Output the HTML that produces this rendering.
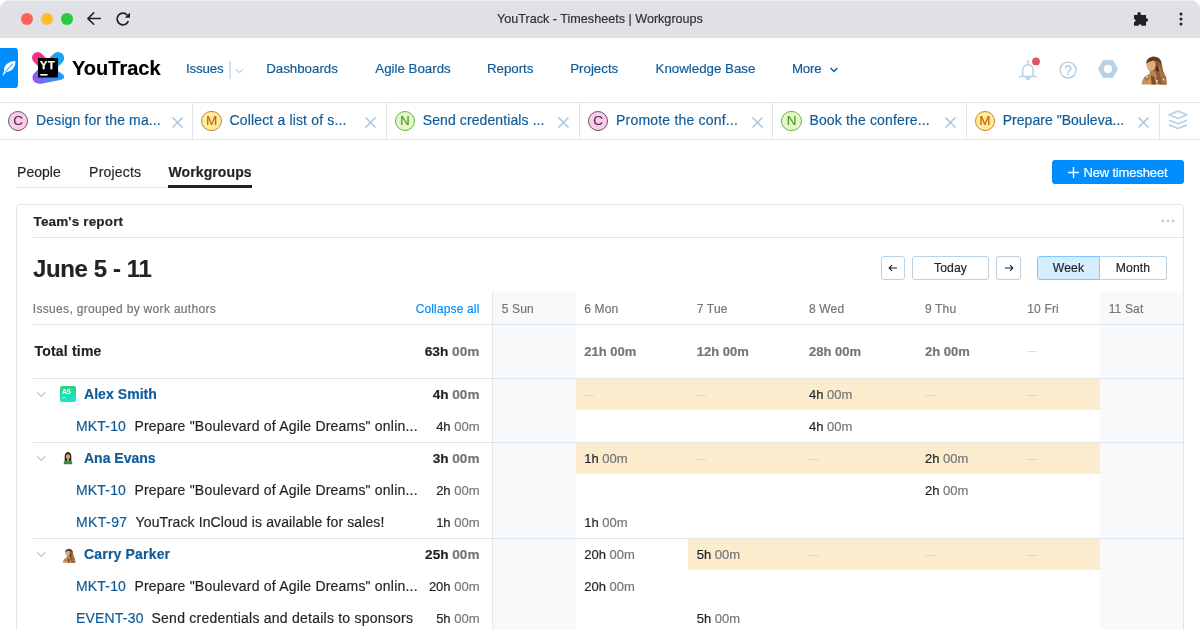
<!DOCTYPE html>
<html lang="en">
<head>
<meta charset="utf-8">
<title>YouTrack - Timesheets | Workgroups</title>
<style>
*{box-sizing:border-box;margin:0;padding:0}
html,body{width:1200px;height:630px;overflow:hidden;background:#fff}
body{font-family:"Liberation Sans",sans-serif;color:#1f2326;position:relative;-webkit-text-stroke:0.180px}
.a{position:absolute;white-space:nowrap}
#win{position:absolute;left:0;top:0;width:1200px;height:630px;overflow:hidden;background:#fff;border-radius:9px 9px 0 0;will-change:transform}
#titlebar{position:absolute;left:0;top:0;width:1200px;height:38px;background:#dfe1e5;border-top:1px solid #ecedef}
.tl{position:absolute;top:12px;width:12px;height:12px;border-radius:50%}
#title{left:0;width:1200px;text-align:center;top:11px;font-size:12.6px;line-height:15px;color:#2e3033}
.nv{top:61.100px;font-size:13.3px;line-height:16px;color:#0f5b99}
#fab{position:absolute;left:0;top:48px;width:18px;height:40px;background:#008eff;border-radius:0 3px 3px 0}
#brand{left:72px;top:56px;font-size:20px;line-height:24px;font-weight:700;color:#000}
#tabs{position:absolute;left:0;top:102px;width:1200px;height:38px;border-top:1px solid #dfe5eb;border-bottom:1px solid #dfe5eb}
.tab{position:absolute;top:0;height:36px;border-right:1px solid #dfe5eb}
.ic{position:absolute;left:8px;top:8px;width:20.400px;height:20.400px;border-radius:50%;border:1.400px solid #555;font-size:13.500px;line-height:17.600px;text-align:center;-webkit-text-stroke:0.200px}
.tx{position:absolute;left:36.100px;top:7.5px;font-size:14px;line-height:18px;color:#0f5b99;white-space:nowrap;letter-spacing:0.1px}
.x{position:absolute;left:171.600px;top:14px}
.st{top:163px;font-size:14px;line-height:18px;color:#1f2326}
#card{position:absolute;left:16px;top:204px;width:1168px;height:440px;border:1px solid #dfe5eb;border-radius:4px;background:#fff}
.btn{position:absolute;top:256px;height:24px;border:1px solid #b8d1e5;border-radius:3px;font-size:12.2px;line-height:22px;text-align:center;color:#1f2326;background:#fff;letter-spacing:0.1px}
.hd{top:301px;font-size:12px;line-height:16px;color:#737577;letter-spacing:0.150px}
.hl{position:absolute;height:31px;background:#faeccd}
.ln{position:absolute;height:1px;background:#dfe5eb}
.t{font-size:13px;line-height:16px;color:#737577}
.t b{font-weight:400;color:#1f2326;-webkit-text-stroke:0.2px #1f2326}
.tb{font-size:13px;line-height:16px;color:#737577;font-weight:700}
.tn{font-size:13.6px;line-height:16px;color:#737577;font-weight:700}
.tn b{color:#1f2326}
.d{position:absolute;width:9.500px;height:1px;background:#dde0e3}
.dh{position:absolute;width:9.500px;height:1px;background:#d9d8d2}
.nm{font-size:14px;line-height:18px;font-weight:700;color:#0f5b99}
.id{font-size:14px;line-height:18px;color:#0f5b99}
.sm{font-size:14px;line-height:18px;color:#1f2326;letter-spacing:0.2px}
</style>
</head>
<body>
<div id="win">
<svg width="0" height="0" style="position:absolute">
<defs>
<linearGradient id="lg1" x1="0" y1="1" x2="1" y2="0.4"><stop offset="0" stop-color="#9a55f7"/><stop offset="0.55" stop-color="#3c8cf4"/><stop offset="1" stop-color="#17a6f2"/></linearGradient>
<linearGradient id="lg2" x1="0" y1="0" x2="0" y2="1"><stop offset="0" stop-color="#2fd17f"/><stop offset="1" stop-color="#17e6d3"/></linearGradient>

</defs></svg>
<div id="titlebar">
<div class="tl" style="left:21px;background:#fe5f57"></div><div class="tl" style="left:41px;background:#febc2e"></div><div class="tl" style="left:61px;background:#28c840"></div>
<svg class="a" style="left:86px;top:10px" width="16" height="16" viewBox="0 0 16 16" fill="none" stroke="#202124" stroke-width="1.5" stroke-linecap="round" stroke-linejoin="round"><path d="M14.400 7.600H1.800M7.700 1.900L1.900 7.600 7.700 13.300"/></svg>
<svg class="a" style="left:115px;top:9px" width="16" height="18" viewBox="0 0 16 18" fill="none" stroke="#202124" stroke-width="1.5" stroke-linecap="round" stroke-linejoin="round"><path d="M12.340 5.270A5.800 5.800 0 1 0 13.350 10.980" stroke-width="1.700" stroke-linecap="butt"/><path d="M15 2.500v5.300H9.800z" fill="#202124" stroke="none"/></svg>
<div id="title" class="a">YouTrack - Timesheets | Workgroups</div>
<svg class="a" style="left:1134px;top:11px" width="15" height="14" viewBox="0 0 15 14"><path d="M0 3h3.400v-1.300a1.700 1.700 0 1 1 3.400 0v1.300h5.200v3.300h.4a1.700 1.700 0 1 1 0 3.400h-.4v4.100h-4.400a1.600 1.600 0 1 0-3.200 0H0v-3.700a1.600 1.600 0 1 0 0-3.200z" fill="#202124"/></svg>
<svg class="a" style="left:1178px;top:11px" width="6" height="16" viewBox="0 0 6 16" fill="#202124"><circle cx="3" cy="2" r="1.500"/><circle cx="3" cy="7" r="1.500"/><circle cx="3" cy="12" r="1.500"/></svg>
</div>
<div id="fab"><svg class="a" style="left:0;top:10px" width="18" height="20" viewBox="0 0 18 20"><path d="M2.700 17.300l1.400-4.300C3.300 7.800 8 3.300 15.300 2.900c.6 6-3.300 10.600-9.500 11.300L3.500 17.600z" fill="#fff"/><path d="M5.200 13.800L12.800 5.800" stroke="#008eff" stroke-width="1" fill="none"/></svg></div>
<svg class="a" style="left:32px;top:52px" width="32" height="32" viewBox="0 0 32 32">
<path d="M26 6.200L6.600 25.500" stroke="url(#lg1)" stroke-width="12.300" stroke-linecap="round" fill="none"/>
<path d="M3 22L16 12l15.400 10.800q2 3.300-2 5L8 32z" fill="url(#lg1)"/>
<path d="M5.700 5.800L15 15" stroke="#fc2f88" stroke-width="11.400" stroke-linecap="round" fill="none"/>
<rect x="6" y="6" width="20" height="19.500" fill="#000"/>
<text x="8" y="16.500" font-family="Liberation Sans, sans-serif" font-size="11" font-weight="700" fill="#fff" letter-spacing="0.7" stroke="#fff" stroke-width="0.25">YT</text>
<rect x="8.300" y="22" width="7.200" height="1.600" fill="#fff"/>
</svg>
<div id="brand" class="a">YouTrack</div>
<div class="a nv" style="left:186.1px;letter-spacing:-0.2px">Issues</div>
<div class="a nv" style="left:266.2px;letter-spacing:0px">Dashboards</div>
<div class="a nv" style="left:375.3px;letter-spacing:0px">Agile Boards</div>
<div class="a nv" style="left:486.9px;letter-spacing:0px">Reports</div>
<div class="a nv" style="left:570.2px;letter-spacing:0px">Projects</div>
<div class="a nv" style="left:655.6px;letter-spacing:0px">Knowledge Base</div>
<div class="a nv" style="left:791.9px;letter-spacing:-0.2px">More</div>
<div class="a" style="left:229.200px;top:61px;width:1.600px;height:18px;background:#d6e4f0"></div>
<svg class="a" style="left:235px;top:68px" width="9" height="6" viewBox="0 0 9 6" fill="none" stroke="#bcd2e6" stroke-width="1.300"><path d="M1 1.200l3.500 3.500L8 1.200"/></svg>
<svg class="a" style="left:829.500px;top:67px" width="8" height="6" viewBox="0 0 8 6" fill="none" stroke="#0f5b99" stroke-width="1.400"><path d="M.6 1.100l3.400 3.400 3.400-3.400"/></svg>
<svg class="a" style="left:1018px;top:58px;overflow:visible" width="24" height="24" viewBox="0 0 24 24" fill="none" stroke="#b8d1e5" stroke-width="1.500"><path d="M9.900 1.800V6.500M4.650 18.300V12a5.250 5.250 0 0 1 10.500 0v6.300M1.200 18.600h17.500"/><path d="M7.200 19.300a2.700 2.700 0 0 0 5.400 0z" fill="#b8d1e5" stroke="none"/><circle cx="18" cy="3.400" r="3.900" fill="#dd5560" stroke="none"/></svg>
<svg class="a" style="left:1058px;top:60px" width="20" height="20" viewBox="0 0 20 20"><circle cx="10.100" cy="10" r="7.950" fill="none" stroke="#b8d1e5" stroke-width="1.500"/><path d="M7.400 8.300a2.700 2.700 0 1 1 4.200 2.300c-1 .7-1.500 1.300-1.500 2.300" fill="none" stroke="#b8d1e5" stroke-width="1.700"/><circle cx="10.100" cy="14.400" r="1" fill="#b8d1e5"/></svg>
<svg class="a" style="left:1097px;top:59px" width="22" height="20" viewBox="0 0 22 20"><path d="M6.200 1.200h9.600l4.900 8.700-4.900 8.700H6.200L1.300 9.900z" fill="#b8d1e5" stroke="#b8d1e5" stroke-width=".6" stroke-linejoin="round"/><circle cx="11" cy="9.900" r="4.100" fill="#fff"/></svg>
<svg class="a" style="left:1136px;top:52.600px;filter:blur(0.6px)" width="32" height="32" viewBox="0 0 32 32"><path d="M5.500 31.500c.5-5 2.500-8 7.500-10.500l10-2c4.500 2 7.500 6 7.800 12.500z" fill="#c99460"/><path d="M10.300 10.500c0-4.500 3.500-7 7.700-7 5 0 7.500 3.500 8 8.500.5 5 2 9 4.200 12l.3 7.500h-8l-3.500-9z" fill="#8c5a34"/><ellipse cx="15" cy="12" rx="4.600" ry="6" fill="#deae82"/><path d="M10.200 10.500c1-5 6-7.500 11.500-5.500 2.500 1.200 3.500 3.500 3.500 6-3-3.500-6.500-4-9.500-3-2.500.8-4 1.500-5.500 2.500z" fill="#5e3519"/><path d="M13.500 17.500l6 1 1.500 6-7 2z" fill="#bb8655"/><path d="M20.500 12.500c2 1.500 3.200 4 2.700 6.500l-3.200-2z" fill="#3a2417"/><path d="M24 12c1.500 5 3 9 6 12.500l.3 7h-4c-1-7-3-13-4.500-17z" fill="#a8723f"/><path d="M15 22.500l3.500 1.500 1.500 7.500h-4.500z" fill="#7d4d2b"/><path d="M8 25l4-3 1.500 2.500-3 4z" fill="#a87345"/><circle cx="11" cy="24" r="1" fill="#f3e3d0"/><circle cx="27.500" cy="26.500" r=".9" fill="#efd9a8"/><circle cx="21" cy="28" r="1" fill="#e9cfae"/></svg>
<div id="tabs">
<div class="tab" style="left:0.0px;width:193.33px"><div class="ic" style="background:#ffc8ec;border-color:#565c5f;color:#3f4548">C</div><div class="tx" style="letter-spacing:0.13px">Design for the ma...</div><svg class="x" width="11" height="11" viewBox="0 0 11 11" stroke="#a9c4de" stroke-width="1.500" fill="none"><path d="M.5.500l10 10M10.500.500l-10 10"/></svg></div>
<div class="tab" style="left:193.33px;width:193.33px"><div class="ic" style="background:#fdec9b;border-color:#ce7f30;color:#c4680c">M</div><div class="tx" style="letter-spacing:0.16px">Collect a list of s...</div><svg class="x" width="11" height="11" viewBox="0 0 11 11" stroke="#a9c4de" stroke-width="1.500" fill="none"><path d="M.5.500l10 10M10.500.500l-10 10"/></svg></div>
<div class="tab" style="left:386.66px;width:193.33px"><div class="ic" style="background:#e6f5d0;border-color:#64b53a;color:#4ea318">N</div><div class="tx" style="letter-spacing:0.1px">Send credentials ...</div><svg class="x" width="11" height="11" viewBox="0 0 11 11" stroke="#a9c4de" stroke-width="1.500" fill="none"><path d="M.5.500l10 10M10.500.500l-10 10"/></svg></div>
<div class="tab" style="left:579.99px;width:193.33px"><div class="ic" style="background:#ffc8ec;border-color:#565c5f;color:#3f4548">C</div><div class="tx" style="letter-spacing:0.19px">Promote the conf...</div><svg class="x" width="11" height="11" viewBox="0 0 11 11" stroke="#a9c4de" stroke-width="1.500" fill="none"><path d="M.5.500l10 10M10.500.500l-10 10"/></svg></div>
<div class="tab" style="left:773.32px;width:193.33px"><div class="ic" style="background:#e6f5d0;border-color:#64b53a;color:#4ea318">N</div><div class="tx" style="letter-spacing:0.15px">Book the confere...</div><svg class="x" width="11" height="11" viewBox="0 0 11 11" stroke="#a9c4de" stroke-width="1.500" fill="none"><path d="M.5.500l10 10M10.500.500l-10 10"/></svg></div>
<div class="tab" style="left:966.65px;width:193.33px"><div class="ic" style="background:#fdec9b;border-color:#ce7f30;color:#c4680c">M</div><div class="tx" style="letter-spacing:0.03px">Prepare "Bouleva...</div><svg class="x" width="11" height="11" viewBox="0 0 11 11" stroke="#a9c4de" stroke-width="1.500" fill="none"><path d="M.5.500l10 10M10.500.500l-10 10"/></svg></div>
<svg class="a" style="left:1168px;top:7px" width="20" height="20" viewBox="0 0 20 20" fill="none" stroke="#b8d1e5" stroke-width="1.700" stroke-linejoin="round"><path d="M10 1.100l9 3.700-9 3.700-9-3.700z"/><path d="M1 10.200l9 3.600 9-3.600M1 14.900l9 3.600 9-3.600"/></svg>
</div>
<div class="a st" style="left:17.100px">People</div><div class="a st" style="left:89.100px;letter-spacing:0.2px">Projects</div><div class="a st" style="left:168.500px;font-weight:700;letter-spacing:0.1px">Workgroups</div>
<div class="ln" style="left:16px;top:187px;width:152px"></div><div class="a" style="left:168px;top:185px;width:84px;height:3px;background:#1f2326"></div>
<div class="a" style="left:1052px;top:160px;width:132px;height:24px;border-radius:3px;background:#008eff"></div>
<svg class="a" style="left:1068px;top:167px" width="11" height="11" viewBox="0 0 11 11" stroke="#fff" stroke-width="1.400"><path d="M5.500 0v11M0 5.500h11"/></svg>
<div class="a" style="left:1083.400px;top:164.7px;font-size:13px;line-height:16px;color:#fff;letter-spacing:-0.15px">New timesheet</div>
<div id="card"></div>
<div class="a" style="left:33.500px;top:213.5px;font-size:13.500px;line-height:16px;font-weight:700;letter-spacing:0.15px">Team's report</div>
<svg class="a" style="left:1161px;top:219px" width="14" height="4" viewBox="0 0 14 4" fill="#b8d1e5"><circle cx="2" cy="2" r="1.400"/><circle cx="7" cy="2" r="1.400"/><circle cx="12" cy="2" r="1.400"/></svg>
<div class="ln" style="left:33px;top:237px;width:1150px"></div>
<div class="a" style="left:33px;top:255px;font-size:24px;line-height:28px;font-weight:700;letter-spacing:-0.4px">June 5 - 11</div>
<div class="btn" style="left:881px;width:24px"></div><div class="btn" style="left:912px;width:77px">Today</div><div class="btn" style="left:996px;width:25px"></div>
<svg class="a" style="left:888px;top:264px" width="10" height="8" viewBox="0 0 10 8" fill="none" stroke="#1f2326" stroke-width="1.100"><path d="M9 4H1.200M4 1.200L1.200 4 4 6.800"/></svg>
<svg class="a" style="left:1004px;top:264px" width="10" height="8" viewBox="0 0 10 8" fill="none" stroke="#1f2326" stroke-width="1.100"><path d="M1 4h7.800M6 1.200L8.800 4 6 6.800"/></svg>
<div class="btn" style="left:1037px;width:63px;background:#d4edff;border-color:#80c6ff;border-radius:3px 0 0 3px">Week</div><div class="btn" style="left:1100px;width:67px;border-radius:0 3px 3px 0;border-left:none">Month</div>
<div class="a" style="left:492px;top:292px;width:83.5px;height:340px;background:#f7f9fa;border-left:1px solid #e4e9ee"></div>
<div class="a" style="left:1100px;top:292px;width:83px;height:340px;background:#f7f9fa"></div>
<div class="ln" style="left:33px;top:324px;width:1150px"></div>
<div class="a hd" style="left:32.800px;letter-spacing:0.32px">Issues, grouped by work authors</div>
<div class="a hd" style="right:720.500px;color:#008eff;letter-spacing:0.15px">Collapse all</div>
<div class="a hd" style="left:501.75px">5 Sun</div>
<div class="a hd" style="left:584.25px">6 Mon</div>
<div class="a hd" style="left:696.75px">7 Tue</div>
<div class="a hd" style="left:809px">8 Wed</div>
<div class="a hd" style="left:925px">9 Thu</div>
<div class="a hd" style="left:1027.3px">10 Fri</div>
<div class="a hd" style="left:1108.7px">11 Sat</div>
<div class="a" style="left:34.500px;top:342px;font-size:14px;line-height:18px;font-weight:700;letter-spacing:0.2px">Total time</div>
<div class="a tn" style="right:720.500px;top:343.7px;font-size:13.700px"><b>63h</b> 00m</div>
<div class="a tb" style="left:584.25px;top:344px">21h 00m</div>
<div class="a tb" style="left:696.75px;top:344px">12h 00m</div>
<div class="a tb" style="left:809px;top:344px">28h 00m</div>
<div class="a tb" style="left:925px;top:344px">2h 00m</div>
<div class="d" style="left:1027.3px;top:351px"></div>
<div class="ln" style="left:33px;top:378px;width:1150px"></div>
<div class="hl" style="left:575.5px;top:379px;width:524.8px"></div>
<svg class="a" style="left:35.700px;top:391.3px" width="11" height="7" viewBox="0 0 11 7" fill="none" stroke="#b8d1e5" stroke-width="1.400"><path d="M1.200 1.200L5.300 5.300l4.100-4.100"/></svg>
<svg class="a" style="left:60px;top:386px" width="16" height="16" viewBox="0 0 16 16"><rect width="16" height="16" rx="2" fill="url(#lg2)"/><text x="2" y="8" font-family="Liberation Sans, sans-serif" font-size="6.800" font-weight="700" fill="#fff" letter-spacing="-0.3">AS</text><rect x="2.300" y="11.200" width="3.200" height="1" fill="#fff" opacity=".7"/></svg>
<div class="a nm" style="left:84px;top:385px;letter-spacing:0.06px">Alex Smith</div>
<div class="a tn" style="right:720.500px;top:386.7px"><b>4h</b> 00m</div>
<div class="dh" style="left:584.25px;top:395px"></div>
<div class="dh" style="left:696.75px;top:395px"></div>
<div class="a t" style="left:809px;top:386.7px"><b>4h</b> 00m</div>
<div class="dh" style="left:925px;top:395px"></div>
<div class="dh" style="left:1027.3px;top:395px"></div>
<div class="a id" style="left:75.900px;top:417px;letter-spacing:0.2px">MKT-10</div>
<div class="a sm" style="left:134.4px;top:417px;letter-spacing:0.2px">Prepare "Boulevard of Agile Dreams" onlin...</div>
<div class="a t" style="right:720.500px;top:418.7px"><b>4h</b> 00m</div>
<div class="a t" style="left:809px;top:418.7px"><b>4h</b> 00m</div>
<div class="ln" style="left:33px;top:442px;width:1150px"></div>
<div class="hl" style="left:575.5px;top:443px;width:524.8px"></div>
<svg class="a" style="left:35.700px;top:455.3px" width="11" height="7" viewBox="0 0 11 7" fill="none" stroke="#b8d1e5" stroke-width="1.400"><path d="M1.200 1.200L5.300 5.300l4.100-4.100"/></svg>
<svg class="a" style="left:60px;top:449.7px" width="16" height="20" viewBox="0 0 16 20"><g style="filter:blur(0.3px)"><path d="M4.700 12.500V6.500c0-3 1.500-4.500 3.300-4.500s3.300 1.500 3.300 4.500v6z" fill="#1f2a2e"/><ellipse cx="8" cy="6.500" rx="2.100" ry="2.600" fill="#e2a860"/><rect x="7.100" y="8.500" width="1.800" height="3.500" fill="#e2a860"/><path d="M3.800 14.300v-2.300c1-.8 2.500-1.200 3.300-1.200l.9 1 .9-1c.8 0 2.300.4 3.300 1.200v2.300z" fill="#2f8f3c"/></g></svg>
<div class="a nm" style="left:84px;top:449px;letter-spacing:0px">Ana Evans</div>
<div class="a tn" style="right:720.500px;top:450.7px"><b>3h</b> 00m</div>
<div class="a t" style="left:584.25px;top:450.7px"><b>1h</b> 00m</div>
<div class="dh" style="left:696.75px;top:459px"></div>
<div class="dh" style="left:809px;top:459px"></div>
<div class="a t" style="left:925px;top:450.7px"><b>2h</b> 00m</div>
<div class="dh" style="left:1027.3px;top:459px"></div>
<div class="a id" style="left:75.900px;top:481px;letter-spacing:0.2px">MKT-10</div>
<div class="a sm" style="left:134.4px;top:481px;letter-spacing:0.2px">Prepare "Boulevard of Agile Dreams" onlin...</div>
<div class="a t" style="right:720.500px;top:482.7px"><b>2h</b> 00m</div>
<div class="a t" style="left:925px;top:482.7px"><b>2h</b> 00m</div>
<div class="a id" style="left:75.900px;top:513px;letter-spacing:0.45px">MKT-97</div>
<div class="a sm" style="left:135.6px;top:513px;letter-spacing:0.12px">YouTrack InCloud is available for sales!</div>
<div class="a t" style="right:720.500px;top:514.7px"><b>1h</b> 00m</div>
<div class="a t" style="left:584.25px;top:514.7px"><b>1h</b> 00m</div>
<div class="ln" style="left:33px;top:538px;width:1150px"></div>
<div class="hl" style="left:688px;top:539px;width:412.29999999999995px"></div>
<svg class="a" style="left:35.700px;top:551.3px" width="11" height="7" viewBox="0 0 11 7" fill="none" stroke="#b8d1e5" stroke-width="1.400"><path d="M1.200 1.200L5.300 5.300l4.100-4.100"/></svg>
<svg class="a" style="left:60px;top:546.5px;filter:blur(0.4px)" width="16" height="16" viewBox="0 0 32 32"><path d="M5.500 31.500c.5-5 2.500-8 7.500-10.500l10-2c4.500 2 7.500 6 7.800 12.500z" fill="#c99460"/><path d="M10.300 10.500c0-4.500 3.500-7 7.700-7 5 0 7.500 3.500 8 8.500.5 5 2 9 4.200 12l.3 7.500h-8l-3.500-9z" fill="#8c5a34"/><ellipse cx="15" cy="12" rx="4.600" ry="6" fill="#deae82"/><path d="M10.200 10.500c1-5 6-7.500 11.500-5.500 2.500 1.200 3.500 3.500 3.500 6-3-3.500-6.500-4-9.500-3-2.500.8-4 1.500-5.500 2.500z" fill="#5e3519"/><path d="M13.500 17.500l6 1 1.500 6-7 2z" fill="#bb8655"/><path d="M20.500 12.500c2 1.500 3.200 4 2.700 6.500l-3.200-2z" fill="#3a2417"/><path d="M24 12c1.500 5 3 9 6 12.500l.3 7h-4c-1-7-3-13-4.500-17z" fill="#a8723f"/><path d="M15 22.500l3.500 1.500 1.500 7.500h-4.500z" fill="#7d4d2b"/><path d="M8 25l4-3 1.500 2.500-3 4z" fill="#a87345"/><circle cx="11" cy="24" r="1" fill="#f3e3d0"/><circle cx="27.500" cy="26.500" r=".9" fill="#efd9a8"/><circle cx="21" cy="28" r="1" fill="#e9cfae"/></svg>
<div class="a nm" style="left:84px;top:545px;letter-spacing:0.18px">Carry Parker</div>
<div class="a tn" style="right:720.500px;top:546.7px"><b>25h</b> 00m</div>
<div class="a t" style="left:584.25px;top:546.7px"><b>20h</b> 00m</div>
<div class="a t" style="left:696.75px;top:546.7px"><b>5h</b> 00m</div>
<div class="dh" style="left:809px;top:555px"></div>
<div class="dh" style="left:925px;top:555px"></div>
<div class="dh" style="left:1027.3px;top:555px"></div>
<div class="a id" style="left:75.900px;top:577px;letter-spacing:0.2px">MKT-10</div>
<div class="a sm" style="left:134.4px;top:577px;letter-spacing:0.2px">Prepare "Boulevard of Agile Dreams" onlin...</div>
<div class="a t" style="right:720.500px;top:578.7px"><b>20h</b> 00m</div>
<div class="a t" style="left:584.25px;top:578.7px"><b>20h</b> 00m</div>
<div class="a id" style="left:75.900px;top:609px;letter-spacing:0.2px">EVENT-30</div>
<div class="a sm" style="left:151.5px;top:609px;letter-spacing:0.24px">Send credentials and details to sponsors</div>
<div class="a t" style="right:720.500px;top:610.7px"><b>5h</b> 00m</div>
<div class="a t" style="left:696.75px;top:610.7px"><b>5h</b> 00m</div>
</div>
</body>
</html>
